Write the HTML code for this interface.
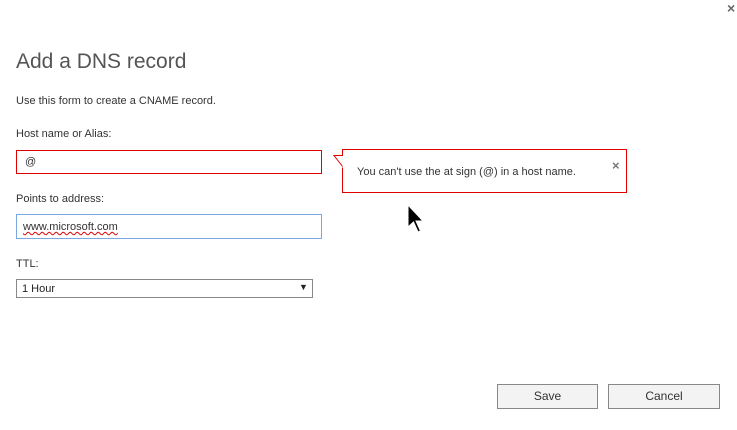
<!DOCTYPE html><html><head><style>
body{margin:0;width:737px;height:430px;background:#fff;font-family:"Liberation Sans",sans-serif;color:#333;position:relative;overflow:hidden}
.a{position:absolute}
.t{font-size:11px}
</style></head><body>
<div class="a" style="left:727px;top:0;font-size:14px;color:#666;font-weight:bold">×</div>
<div class="a" style="left:16px;top:50px;font-size:21px;color:#555">Add a DNS record</div>
<div class="a t" style="left:16px;top:95px">Use this form to create a CNAME record.</div>
<div class="a t" style="left:16px;top:128px">Host name or Alias:</div>
<div class="a" style="left:16px;top:150px;width:304px;height:22px;border:1px solid #e00000"></div>
<div class="a t" style="left:25px;top:156px">@</div>
<div class="a" style="left:342px;top:149px;width:283px;height:42px;border:1px solid #e00000;background:#fff"></div>
<svg class="a" style="left:332px;top:154px" width="14" height="30"><path d="M11 1.5 L2 1.5 L11 13" fill="#fff" stroke="#e00000" stroke-width="1"/><rect x="10.5" y="2" width="2" height="12" fill="#fff"/></svg>
<div class="a t" style="left:357px;top:166px">You can't use the at sign (@) in a host name.</div>
<div class="a" style="left:612px;top:158px;font-size:13px;color:#777;font-weight:bold">×</div>
<svg class="a" style="left:407px;top:204px" width="20" height="32"><path d="M1 1 L1 23 L6.5 18 L11 28 L13.5 27 L9 17 L16 17 Z" fill="#000" stroke="#fff" stroke-width="1"/></svg>
<div class="a t" style="left:16px;top:193px">Points to address:</div>
<div class="a" style="left:16px;top:214px;width:304px;height:23px;border:1px solid #7aa7e0"></div>
<div class="a t" style="left:23px;top:221px;text-decoration:underline wavy #e00000;text-decoration-thickness:1px">www.microsoft.com</div>
<div class="a t" style="left:16px;top:258px">TTL:</div>
<div class="a" style="left:16px;top:279px;width:295px;height:17px;border:1px solid #888"></div>
<div class="a t" style="left:22px;top:283px;color:#222">1 Hour</div>
<div class="a" style="left:299px;top:282px;font-size:9px;color:#222">▼</div>
<div class="a t" style="left:497px;top:384px;width:99px;height:23px;border:1px solid #888;background:#f3f3f3;text-align:center;line-height:23px;font-size:12px">Save</div>
<div class="a t" style="left:608px;top:384px;width:110px;height:23px;border:1px solid #888;background:#f3f3f3;text-align:center;line-height:23px;font-size:12px">Cancel</div>
</body></html>
